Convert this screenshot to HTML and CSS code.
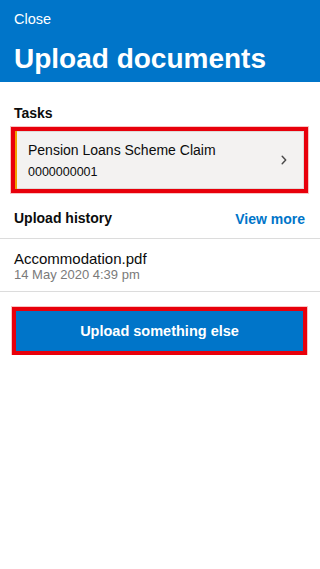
FILE: index.html
```html
<!DOCTYPE html>
<html>
<head>
<meta charset="utf-8">
<link rel="stylesheet" href="styles.css">
</head>
<body>
<header class="header">
  <div class="close">Close</div>
  <h1 class="title">Upload documents</h1>
</header>
<main class="content">
  <h2 class="section-title tasks-title">Tasks</h2>
  <div class="task-outline">
    <div class="task-card">
      <div class="task-text">
        <div class="task-name">Pension Loans Scheme Claim</div>
        <div class="task-ref">0000000001</div>
      </div>
      <svg class="chevron" width="6" height="10" viewBox="0 0 6 10"><path d="M1.2 1.3 L4.7 5 L1.2 8.7" fill="none" stroke="#4a4a4a" stroke-width="1.5" stroke-linecap="round" stroke-linejoin="round"/></svg>
    </div>
  </div>
  <div class="history-head">
    <h2 class="section-title">Upload history</h2>
    <a class="view-more">View more</a>
  </div>
  <div class="history-item">
    <div class="file-name">Accommodation.pdf</div>
    <div class="file-date">14 May 2020 4:39 pm</div>
  </div>
  <div class="button-outline">
    <button class="upload-btn">Upload something else</button>
  </div>
</main>
</body>
</html>
```
FILE: styles.css
```css
* { box-sizing: border-box; }
html, body { margin: 0; padding: 0; background: #fff; }
body {
  font-family: "Liberation Sans", Arial, sans-serif;
  color: #0b0c0c;
  width: 320px;
}
.header {
  background: #0075c9;
  color: #fff;
  height: 82px;
  padding: 11px 14px 0;
}
.close {
  font-size: 14.5px;
  line-height: 17px;
}
.title {
  margin: 15px 0 0;
  font-size: 28px;
  line-height: 32px;
  font-weight: 700;
}
.content {
  display: flex;
  flex-direction: column;
}
.section-title {
  margin: 0;
  font-size: 14px;
  line-height: 17px;
  font-weight: 700;
}
.tasks-title {
  padding: 23px 14px 0;
}
.task-outline {
  margin: 5px 12px 0 11px;
  border: 4px solid #e8000b;
  box-shadow: 0 0 0 1px rgba(240, 60, 60, 0.3);
  height: 66px;
}
.task-card {
  height: 100%;
  background: #f3f2f1;
  border-left: 2px solid #f0a000;
  box-shadow: inset 0 1px 0 #dddad7, inset -1px -1px 0 #dddad7;
  display: flex;
  align-items: center;
  padding: 0 17px 0 11px;
}
.task-text {
  flex: 1;
  padding-top: 1px;
}
.task-name {
  font-size: 14px;
  line-height: 18px;
}
.task-ref {
  margin-top: 5px;
  font-size: 12.5px;
  line-height: 16px;
}
.chevron { display: block; }
.history-head {
  display: flex;
  justify-content: space-between;
  align-items: flex-start;
  padding: 17px 14px 0;
  height: 46px;
  border-bottom: 1px solid #dcdcdc;
}
.view-more {
  color: #0075c9;
  font-size: 14px;
  line-height: 17px;
  font-weight: 700;
  margin-top: 1px;
  margin-right: 1px;
}
.history-item {
  padding: 11px 14px 0;
  height: 53px;
  border-bottom: 1px solid #dcdcdc;
}
.file-name {
  font-size: 15px;
  line-height: 17px;
}
.file-date {
  font-size: 13px;
  line-height: 16px;
  color: #7a7a7a;
}
.button-outline {
  margin: 15px 13px 0 12px;
  border: 4px solid #e8000b;
  box-shadow: 0 0 0 1px rgba(240, 60, 60, 0.3);
  height: 48px;
}
.upload-btn {
  display: block;
  width: 100%;
  height: 100%;
  border: 0;
  background: #0075c9;
  color: #fff;
  font-family: "Liberation Sans", Arial, sans-serif;
  font-size: 14.5px;
  font-weight: 700;
  padding: 0;
}
```
